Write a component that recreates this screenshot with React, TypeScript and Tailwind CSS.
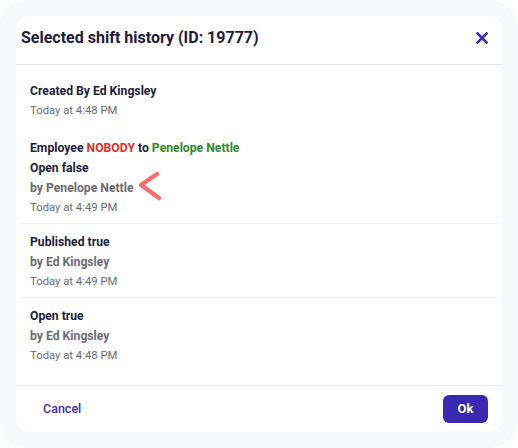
import React from "react";

export default function App() {
  return (
    <div className="w-[518px] h-[448px] bg-white" style={{ fontFamily: "Roboto, 'Noto Sans', sans-serif" }}>
      <div className="w-full h-full rounded-[28px] bg-[#f7f8fa] p-4">
        <div className="w-full h-full rounded-[14px] bg-white flex flex-col">
          <div className="h-[49px] flex items-center justify-between pl-[5px] pr-[14px] pb-[5px] border-b border-[#e8e8ec]">
            <div className="text-[16px] font-bold text-[#1e1c3a]">Selected shift history (ID: 19777)</div>
            <svg width="12" height="12" viewBox="0 0 12 12">
              <path d="M1.5 1.5 L10.5 10.5 M10.5 1.5 L1.5 10.5" stroke="#3b2db5" strokeWidth="2.6" strokeLinecap="square" />
            </svg>
          </div>
          <div className="flex-1 px-1 pt-[8px] text-[12.2px] leading-[20px]">
            <div className="pl-[10px] py-2">
              <div className="font-bold text-[#1e1c3a]">Created By Ed Kingsley</div>
              <div className="text-[11.3px] text-[#6b6b70]">Today at 4:48 PM</div>
            </div>
            <div className="pl-[10px] pt-[9px] pb-[5px] border-b border-[#efeff2] relative">
              <div className="font-bold text-[#1e1c3a]">
                Employee <span className="text-[#d9302a]">NOBODY</span> to <span className="text-[#2f8a2a]">Penelope Nettle</span>
              </div>
              <div className="font-bold text-[#1e1c3a]">Open false</div>
              <div className="font-bold text-[#6b6b70]">by Penelope Nettle</div>
              <div className="text-[11.3px] text-[#6b6b70]">Today at 4:49 PM</div>
              <svg width="26" height="34" viewBox="0 0 26 34" className="absolute left-[117px] top-[41px]">
                <path d="M20 4 L4 15 L22 28" fill="none" stroke="#f56f6c" strokeWidth="4.5" strokeLinecap="round" strokeLinejoin="round" />
              </svg>
            </div>
            <div className="pl-[10px] pt-2 pb-[5px] border-b border-[#efeff2]">
              <div className="font-bold text-[#1e1c3a]">Published true</div>
              <div className="font-bold text-[#6b6b70]">by Ed Kingsley</div>
              <div className="text-[11.3px] text-[#6b6b70]">Today at 4:49 PM</div>
            </div>
            <div className="pl-[10px] pt-2">
              <div className="font-bold text-[#1e1c3a]">Open true</div>
              <div className="font-bold text-[#6b6b70]">by Ed Kingsley</div>
              <div className="text-[11.3px] text-[#6b6b70]">Today at 4:48 PM</div>
            </div>
          </div>
          <div className="h-[47px] border-t border-[#e8e8ec] flex items-center justify-between pl-[27px] pr-[14px]">
            <div className="text-[12.5px] font-medium text-[#3b2db5]">Cancel</div>
            <div className="w-[45px] h-[28px] rounded-[6px] bg-[#3829b0] text-white text-[13px] font-bold flex items-center justify-center">Ok</div>
          </div>
        </div>
      </div>
    </div>
  );
}
